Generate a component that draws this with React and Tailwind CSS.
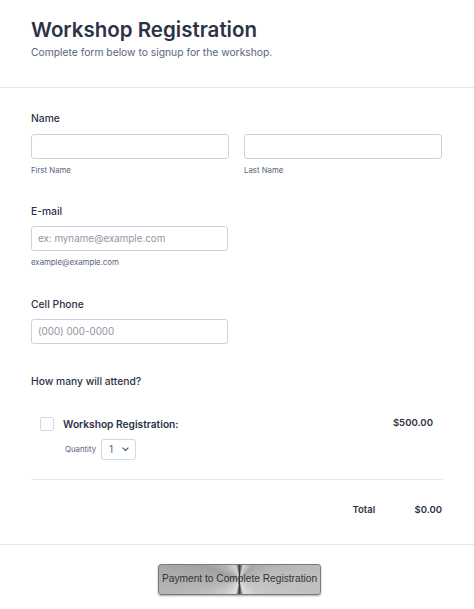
import React from 'react';

function TextInput({ placeholder, className = '' }) {
  return (
    <input
      type="text"
      placeholder={placeholder}
      className={`h-[25px] rounded-[3px] border border-[#ccd2dd] bg-white px-[6px] text-[9.8px] text-[#2c3345] placeholder:text-[#8f96a3] outline-none ${className}`}
    />
  );
}

export default function App() {
  return (
    <div className="min-h-screen bg-white font-['Inter',sans-serif] text-[#2c3345]">
      {/* Header */}
      <div className="border-b border-[#e6e8ee] px-[31px] pb-[28px] pt-[16px]">
        <h1 className="text-[20.5px] font-semibold leading-[27px]">Workshop Registration</h1>
        <p className="mt-[2px] text-[10.3px] leading-[14px] text-[#57647e]">Complete form below to signup for the workshop.</p>
      </div>

      <div className="px-[31px] pt-[23px]">
        {/* Name */}
        <div>
          <label className="block text-[10.3px] font-medium leading-[14px]">Name</label>
          <div className="mt-[7px] flex gap-[15px]">
            <div className="w-[198px]">
              <TextInput className="w-full" />
              <div className="mt-[6px] text-[7.8px] text-[#57647e]">First Name</div>
            </div>
            <div className="w-[198px]">
              <TextInput className="w-full" />
              <div className="mt-[6px] text-[7.8px] text-[#57647e]">Last Name</div>
            </div>
          </div>
        </div>

        {/* Email */}
        <div className="mt-[27px]">
          <label className="block text-[10.3px] font-medium leading-[14px]">E-mail</label>
          <TextInput placeholder="ex: myname@example.com" className="mt-[8px] w-[197px]" />
          <div className="mt-[6px] text-[7.8px] text-[#57647e]">example@example.com</div>
        </div>

        {/* Phone */}
        <div className="mt-[29px]">
          <label className="block text-[10.3px] font-medium leading-[14px]">Cell Phone</label>
          <TextInput placeholder="(000) 000-0000" className="mt-[8px] w-[197px]" />
        </div>

        {/* Attend */}
        <div className="mt-[30px]">
          <label className="block text-[10.3px] font-medium leading-[14px]">How many will attend?</label>

          <div className="mt-[29px] flex items-start pl-[9px] pr-[10px]">
            <div className="h-[14px] w-[14px] rounded-[2px] border border-[#d3d8e2] bg-white" />
            <div className="ml-[9px] flex-1">
              <div className="text-[10.2px] font-semibold leading-[14px]">Workshop Registration:</div>
              <div className="mt-[8px] flex items-center">
                <span className="ml-[2px] text-[7.8px] text-[#57647e]">Quantity</span>
                <div className="ml-[5px] flex h-[21px] w-[35px] items-center justify-between rounded-[3px] border border-[#d3d8e2] pl-[7px] pr-[6px]">
                  <span className="text-[10px] text-[#57647e]">1</span>
                  <svg width="7" height="5" viewBox="0 0 7 5" fill="none">
                    <path d="M1 1l2.5 2.5L6 1" stroke="#57647e" strokeWidth="1.2" strokeLinecap="round" strokeLinejoin="round" />
                  </svg>
                </div>
              </div>
            </div>
            <div className="text-[9.6px] font-semibold leading-[12px]">$500.00</div>
          </div>

          <div className="mt-[19px] border-t border-[#e6e8ee]" />

          <div className="flex justify-end pb-[26px] pr-[1px] pt-[23px] text-[9.5px] font-semibold">
            <span className="w-[62px]">Total</span>
            <span>$0.00</span>
          </div>
        </div>
      </div>

      {/* Submit */}
      <div className="flex justify-center border-t border-[#e6e8ee] pt-[19px]">
        <button
          type="button"
          className="ml-[5px] h-[31px] w-[163px] whitespace-nowrap rounded-[3px] border border-[#7a7a7a] bg-[conic-gradient(from_0deg_at_50%_50%,#3a3a3a_0deg,#777_6deg,#d4d4d4_16deg,#a6a6a6_45deg,#bdbdbd_85deg,#c9c9c9_125deg,#e0e0e0_164deg,#777_174deg,#3a3a3a_180deg,#777_186deg,#e0e0e0_196deg,#c4c4c4_240deg,#a0a0a0_290deg,#d4d4d4_344deg,#777_354deg,#3a3a3a_360deg)] px-0 font-['Liberation_Sans',Arial,sans-serif] text-[10.2px] text-[#333] shadow-[0_1px_2px_rgba(0,0,0,0.35)]"
        >
          Payment to Complete Registration
        </button>
      </div>
    </div>
  );
}
